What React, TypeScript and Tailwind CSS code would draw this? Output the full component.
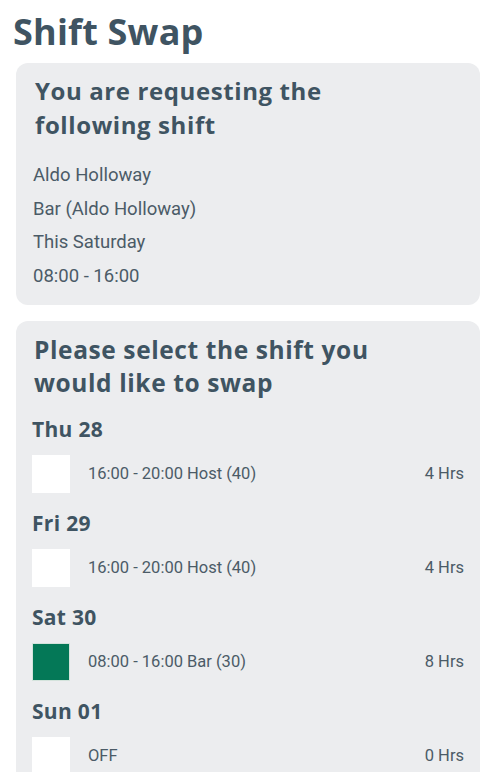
import React from 'react'

const days = [
    { label: 'Thu 28', shift: '16:00 - 20:00 Host (40)', hrs: '4 Hrs', checked: false },
    { label: 'Fri 29', shift: '16:00 - 20:00 Host (40)', hrs: '4 Hrs', checked: false },
    { label: 'Sat 30', shift: '08:00 - 16:00 Bar (30)', hrs: '8 Hrs', checked: true },
    { label: 'Sun 01', shift: 'OFF', hrs: '0 Hrs', checked: false },
]

const App = () => {
    return (
        <div className="bg-white w-full min-h-screen font-['Roboto',sans-serif] text-[#3f5462]">
            <h1 className="font-['Open_Sans',sans-serif] font-bold text-[36px] leading-[40px] pl-[13px] pt-[12px] tracking-[0.2px]">
                Shift Swap
            </h1>
            <div className="px-4 pt-[11px] flex flex-col gap-[16px]">
                <div className="bg-[#ecedef] rounded-[12px] pl-[17px] pr-4 pt-[11px] pb-[12px]">
                    <h2 className="font-['Open_Sans',sans-serif] font-bold text-[24px] leading-[34px] tracking-[0.6px] w-[320px] pl-[2px]">
                        You are requesting the following shift
                    </h2>
                    <div className="mt-[17px] flex flex-col text-[18.5px] leading-[33.5px] text-[#4b5b67]">
                        <span>Aldo Holloway</span>
                        <span>Bar (Aldo Holloway)</span>
                        <span>This Saturday</span>
                        <span>08:00 - 16:00</span>
                    </div>
                </div>
                <div className="bg-[#ecedef] rounded-t-[12px] pl-4 pr-4 pt-[12px] pb-6">
                    <h2 className="font-['Open_Sans',sans-serif] font-bold text-[24.5px] leading-[33px] tracking-[0.6px] w-[380px] pl-[2px]">
                        Please select the shift you would like to swap
                    </h2>
                    <div className="flex flex-col mt-[16px]">
                        {days.map((d) => (
                            <div key={d.label} className="flex flex-col h-[94px]">
                                <span className="font-['Open_Sans',sans-serif] font-bold text-[21px] leading-[28px] tracking-[0.3px]">
                                    {d.label}
                                </span>
                                <div className="flex items-center mt-[12px]">
                                    <div
                                        className={
                                            d.checked
                                                ? 'w-[38px] h-[38px] bg-[#047857] border border-[#d4e3dc]'
                                                : 'w-[38px] h-[38px] bg-white'
                                        }
                                    />
                                    <span className="ml-[18px] text-[16.5px] text-[#4b5b67] flex-1">
                                        {d.shift}
                                    </span>
                                    <span className="text-[16.5px] text-[#4b5b67]">
                                        {d.hrs}
                                    </span>
                                </div>
                            </div>
                        ))}
                    </div>
                </div>
            </div>
        </div>
    )
}

export default App
